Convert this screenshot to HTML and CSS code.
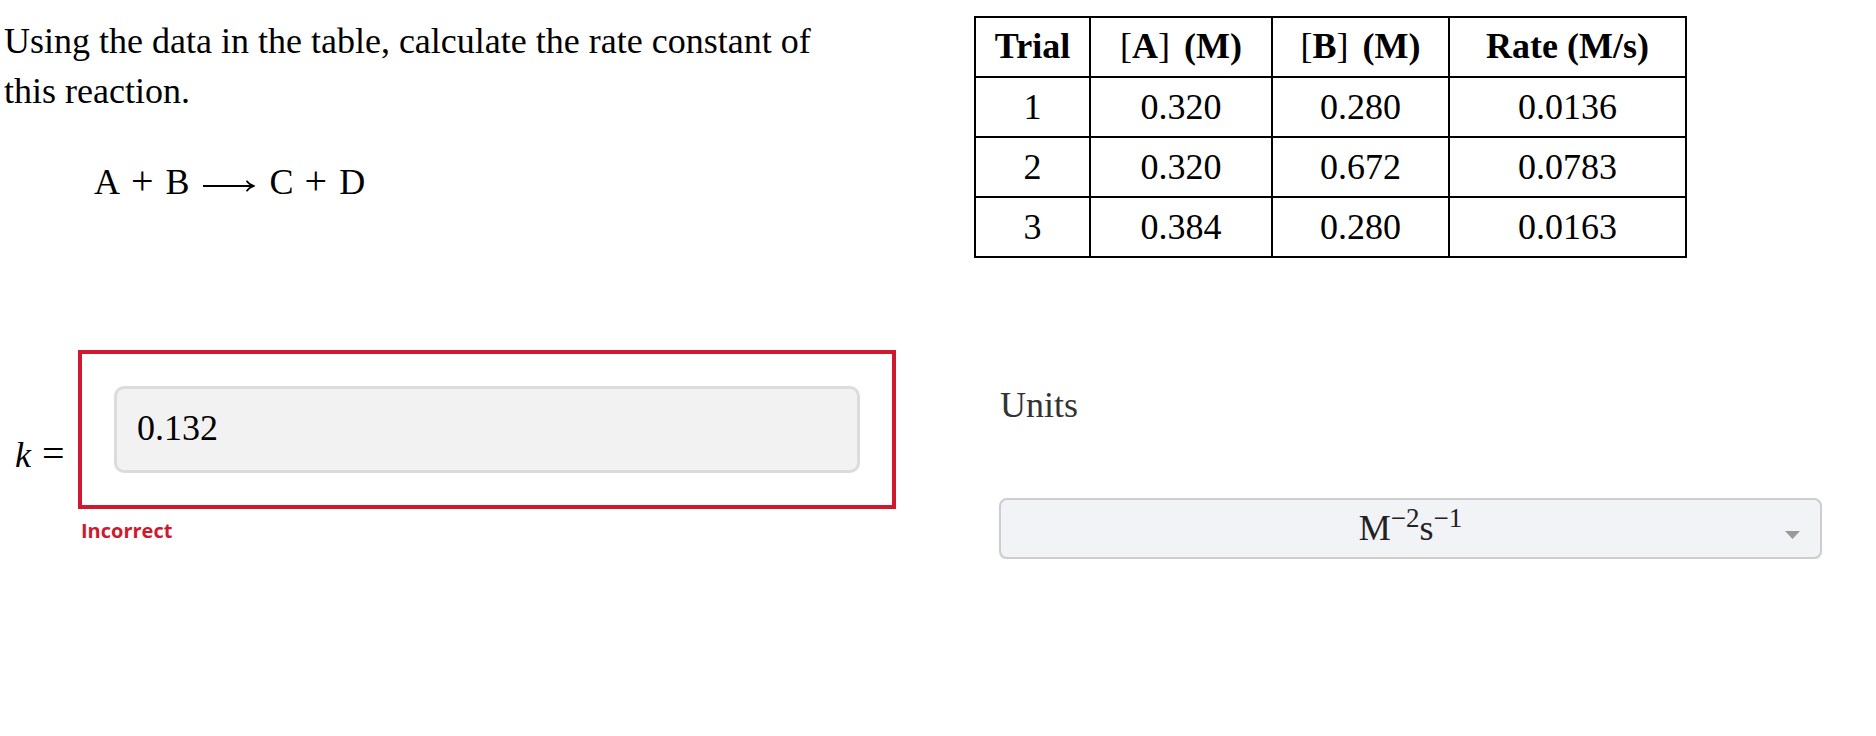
FILE: index.html
```html
<!DOCTYPE html>
<html lang="en">
<head>
  <meta charset="UTF-8" />
  <meta name="viewport" content="width=device-width, initial-scale=1.0" />
  <title>Rate Constant Question</title>
  <link rel="stylesheet" href="styles.css">
</head>
<body>
  <div class="page">
    <section class="top">
      <div class="question">
        <p class="prompt">Using the data in the table, calculate the rate constant of this reaction.</p>
        <div class="equation">
          <span>A</span><span class="op">+</span><span>B</span><svg class="arrow" width="52" height="14" viewBox="0 0 52 14"><path d="M0 7 H50" stroke="#000" stroke-width="1.8" fill="none"/><path d="M43.5 1.8 Q46 5.6 51 7 Q46 8.4 43.5 12.2" stroke="#000" stroke-width="1.6" fill="none"/></svg><span>C</span><span class="op">+</span><span>D</span>
        </div>
      </div>

      <table class="data">
        <colgroup>
          <col class="c1"><col class="c2"><col class="c3"><col class="c4">
        </colgroup>
        <tr>
          <th>Trial</th>
          <th><span class="br">[</span>A<span class="br">]</span><span class="unit">(M)</span></th>
          <th><span class="br">[</span>B<span class="br">]</span><span class="unit">(M)</span></th>
          <th>Rate (M/s)</th>
        </tr>
        <tr><td>1</td><td>0.320</td><td>0.280</td><td>0.0136</td></tr>
        <tr><td>2</td><td>0.320</td><td>0.672</td><td>0.0783</td></tr>
        <tr><td>3</td><td>0.384</td><td>0.280</td><td>0.0163</td></tr>
      </table>
    </section>

    <section class="answer-row">
      <div class="answer">
        <div class="k-field">
          <span class="k-label"><i>k</i><span class="eq">=</span></span>
          <div class="feedback-box">
            <div class="value-input">0.132</div>
          </div>
        </div>
        <div class="incorrect">Incorrect</div>
      </div>

      <div class="units">
        <div class="units-label">Units</div>
        <div class="select">
          M<sup>−2</sup>s<sup>−1</sup>
          <svg class="caret" width="15" height="8" viewBox="0 0 15 8"><polygon points="0,0 15,0 7.5,8" fill="#9a9a9a"/></svg>
        </div>
      </div>
    </section>
  </div>
</body>
</html>
```

FILE: styles.css
```css
body {
  margin: 0;
  font-family: "Liberation Serif", "Times New Roman", serif;
  background: #fff;
  color: #000;
}
.page {
  padding-left: 4px;
}
.top {
  display: flex;
  align-items: flex-start;
}
.question {
  width: 970px;
  flex-shrink: 0;
}
.prompt {
  margin: 16px 0 0;
  width: 850px;
  font-size: 36px;
  line-height: 50px;
}
.equation {
  margin: 40px 0 0 90px;
  font-size: 36px;
  line-height: 50px;
  white-space: nowrap;
}
.equation .op {
  font-size: 40px;
  margin: 0 12px 0 11px;
}
.equation .arrow {
  vertical-align: middle;
  margin: 0 15px 0 13px;
}
.data {
  margin-top: 16px;
  border-collapse: collapse;
  table-layout: fixed;
  border: 2px solid #000;
  font-size: 36px;
}
.data .c1 { width: 115px; }
.data .c2 { width: 182px; }
.data .c3 { width: 177px; }
.data .c4 { width: 237px; }
.data tr {
  height: 60px;
}
.data th,
.data td {
  border: 2px solid #000;
  padding: 0;
  text-align: center;
  line-height: 40px;
}
.data th {
  font-weight: bold;
  padding-bottom: 3px;
}
.data .br {
  font-weight: normal;
}
.data .unit {
  margin-left: 14px;
}
.answer-row {
  display: flex;
  align-items: flex-start;
  margin-top: 92px;
}
.answer {
  width: 995px;
  flex-shrink: 0;
}
.k-field {
  display: flex;
  align-items: flex-start;
}
.k-label {
  width: 74px;
  margin-top: 86px;
  padding-left: 11px;
  box-sizing: border-box;
  font-size: 36px;
  line-height: 36px;
}
.k-label .eq {
  margin-left: 11px;
  font-size: 40px;
}
.feedback-box {
  width: 818px;
  height: 159px;
  box-sizing: border-box;
  border: 4px solid #d0192e;
  padding: 32px;
}
.value-input {
  height: 87px;
  box-sizing: border-box;
  border: 3px solid #dcdcdc;
  border-radius: 10px;
  background: #f2f2f2;
  padding-left: 20px;
  font-size: 36px;
  line-height: 79px;
}
.incorrect {
  margin: 8px 0 0 77px;
  font-family: "Open Sans", sans-serif;
  font-weight: 700;
  font-size: 20px;
  line-height: 28px;
  color: #d0192e;
}
.units {
  width: 823px;
  margin-top: 30px;
}
.units-label {
  padding-left: 1px;
  font-size: 36px;
  line-height: 50px;
  color: #333;
}
.select {
  position: relative;
  margin-top: 68px;
  height: 61px;
  box-sizing: border-box;
  border: 2px solid #cdcdcd;
  border-radius: 8px;
  background: #f2f3f6;
  box-shadow: 0 1px 1px rgba(0,0,0,0.08);
  text-align: center;
  font-size: 36px;
  line-height: 57px;
  color: #222;
}
.select sup {
  font-size: 27px;
  line-height: 0;
  vertical-align: 13px;
}
.caret {
  position: absolute;
  right: 20px;
  top: 31px;
}
```
